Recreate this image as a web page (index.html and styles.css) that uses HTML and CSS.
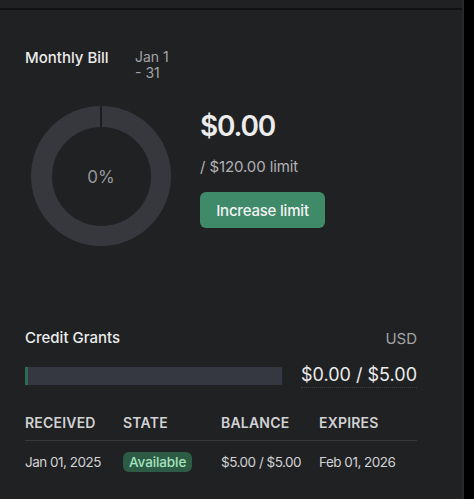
FILE: index.html
```html
<!DOCTYPE html>
<html lang="en">
<head>
<meta charset="utf-8">
<title>Billing</title>
<link rel="stylesheet" href="styles.css">
</head>
<body>
<div class="page">
  <div class="panel">
    <div class="topstrip"></div>
    <div class="content">
      <section class="bill">
        <div class="bill-head">
          <h2 class="title">Monthly Bill</h2>
          <div class="period">Jan 1<br>- 31</div>
        </div>
        <div class="bill-body">
          <div class="donut">
            <div class="donut-hole"><span class="pct">0%</span></div>
            <div class="donut-tick"></div>
          </div>
          <div class="bill-info">
            <div class="amount">$0.00</div>
            <div class="limit">/ $120.00 limit</div>
            <button class="btn">Increase limit</button>
          </div>
        </div>
      </section>
      <section class="grants">
        <div class="grants-head">
          <h2 class="title">Credit Grants</h2>
          <span class="currency">USD</span>
        </div>
        <div class="grants-bar-row">
          <div class="bar"><div class="bar-fill"></div></div>
          <div class="bar-total">$0.00 / $5.00</div>
        </div>
        <div class="table">
          <div class="row head">
            <div>RECEIVED</div>
            <div>STATE</div>
            <div>BALANCE</div>
            <div>EXPIRES</div>
          </div>
          <div class="row">
            <div>Jan 01, 2025</div>
            <div><span class="badge">Available</span></div>
            <div>$5.00 / $5.00</div>
            <div>Feb 01, 2026</div>
          </div>
        </div>
      </section>
    </div>
  </div>
  <div class="edge"></div>
</div>
</body>
</html>
```
FILE: styles.css
```css
* { box-sizing: border-box; }
html, body { margin: 0; padding: 0; background: #000; }
body {
  font-family: Inter, "Noto Sans", "Liberation Sans", sans-serif;
  color: #ececec;
}
.page {
  display: flex;
  width: 474px;
  height: 499px;
  overflow: hidden;
}
.panel {
  width: 464px;
  background: #202123;
  border-right: 2px solid #27282b;
}
.edge {
  flex: 1;
  background: #000;
}
.topstrip {
  height: 10px;
  border-bottom: 2px solid #121213;
}
.content {
  width: 392px;
  margin-left: 25px;
  padding-top: 36px;
}
.title {
  margin: 0;
  font-size: 15px;
  font-weight: 500;
  line-height: 20px;
  color: #ececec;
  letter-spacing: 0;
}
.bill-head {
  display: flex;
  align-items: flex-start;
}
.bill-head .title { width: 110px; padding-top: 2px; }
.period {
  font-size: 14px;
  line-height: 16px;
  color: #a3a3a6;
  padding-top: 3px;
}
.bill-body {
  display: flex;
  align-items: flex-start;
  margin-top: 25px;
  margin-left: 6px;
}
.donut {
  position: relative;
  width: 140px;
  height: 140px;
  border-radius: 50%;
  background: #36383e;
  display: flex;
  align-items: center;
  justify-content: center;
  flex: none;
}
.donut-hole {
  width: 99px;
  height: 99px;
  border-radius: 50%;
  background: #202123;
  display: flex;
  align-items: center;
  justify-content: center;
}
.pct {
  font-size: 17px;
  color: #98989c;
  margin-top: 2px;
}
.donut-tick {
  position: absolute;
  left: 69px;
  top: 0;
  width: 1.5px;
  height: 21px;
  background: #1c1d1f;
}
.bill-info {
  margin-left: 29px;
  padding-top: 3px;
}
.amount {
  font-size: 28px;
  font-weight: 600;
  line-height: 34px;
  color: #ececec;
  letter-spacing: -1.2px;
}
.limit {
  margin-top: 15px;
  font-size: 15px;
  line-height: 18px;
  color: #b2b2b5;
  letter-spacing: -0.1px;
}
.btn {
  margin-top: 16px;
  width: 125px;
  height: 36px;
  border: 0;
  border-radius: 6px;
  background: #3e8a69;
  color: #f3f3f3;
  font-family: inherit;
  font-size: 15px;
  font-weight: 500;
  letter-spacing: -0.2px;
  padding: 0;
}
.grants { margin-top: 82px; }
.grants-head {
  display: flex;
  justify-content: space-between;
  align-items: center;
}
.currency {
  font-size: 15px;
  color: #a3a3a6;
}
.grants-bar-row {
  display: flex;
  justify-content: space-between;
  align-items: center;
  margin-top: 15px;
}
.bar {
  width: 257px;
  height: 18px;
  background: #363841;
  border-radius: 1px;
}
.bar-fill {
  width: 3px;
  height: 100%;
  background: #2f6b52;
}
.bar-total {
  font-size: 18px;
  line-height: 24px;
  color: #ececec;
  border-bottom: 1px dotted #3a3b3f;
}
.table { margin-top: 23px; }
.row {
  display: grid;
  grid-template-columns: 98px 98px 98px 98px;
  align-items: center;
  font-size: 14px;
  color: #d2d2d4;
}
.row.head {
  font-weight: 600;
  letter-spacing: 0.2px;
  height: 30px;
  border-bottom: 1px solid #38393c;
  padding-bottom: 6px;
}
.row:not(.head) {
  height: 42px;
  font-size: 13.5px;
  letter-spacing: -0.5px;
}
.badge {
  display: inline-block;
  background: #2c5c46;
  color: #a6e3bd;
  border-radius: 6px;
  padding: 0 6px;
  height: 20px;
  line-height: 20px;
  font-size: 13.5px;
  font-weight: 500;
  letter-spacing: -0.1px;
}
```
